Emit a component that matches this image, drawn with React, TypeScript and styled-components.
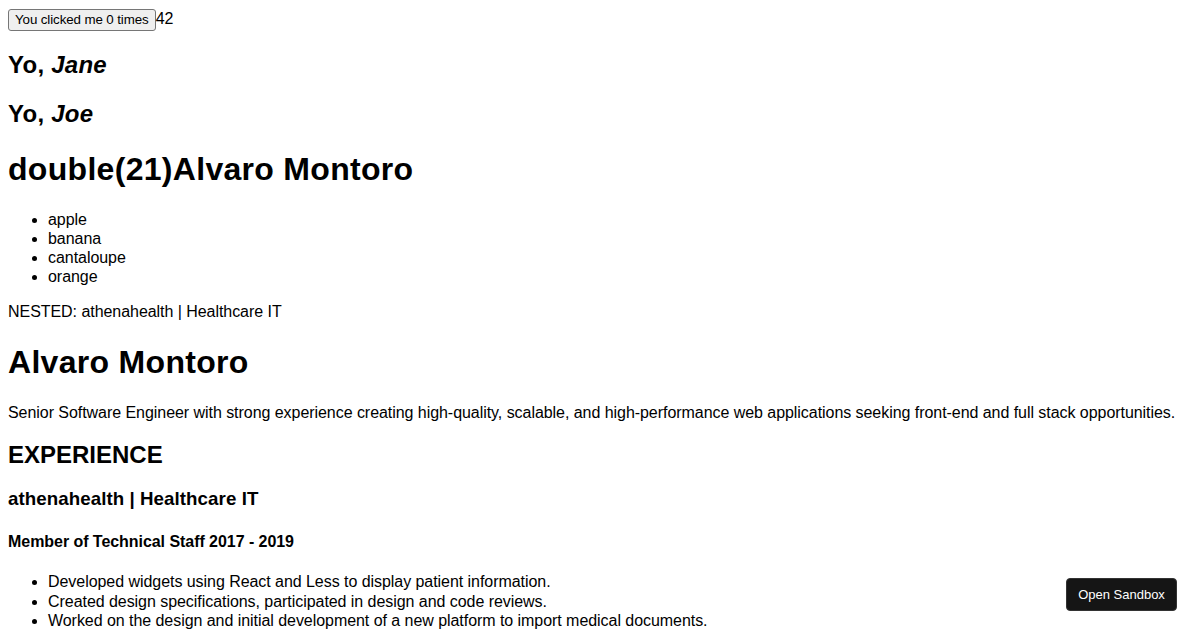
import React from "react";
import styled, { createGlobalStyle } from "styled-components";

const Global = createGlobalStyle`
  body {
    margin: 8px;
    font-family: "Liberation Sans", Arial, Helvetica, sans-serif;
    line-height: 1.2;
    letter-spacing: -0.05px;
    color: #000;
    background: #fff;
  }
`;

const TopLine = styled.div`
  line-height: 22px;
`;

const Counter = styled.button`
  font-family: "Liberation Sans", Arial, sans-serif;
  font-size: 13.333px;
  line-height: 16px;
  padding: 2px 6px;
  border: 1px solid #767676;
  border-radius: 3px;
  background: #efefef;
  color: #000;
  letter-spacing: -0.1px;
`;

const Greeting = styled.h2`
  font-size: 24px;
  margin: 19.92px 0;
  letter-spacing: 0.25px;
`;

const Title = styled.h1`
  font-size: 32px;
  margin: 21.44px 0;
  letter-spacing: 0.3px;
`;

const List = styled.ul`
  margin: 16px 0;
  padding-left: 40px;
`;

const Para = styled.p`
  margin: 16px 0;
`;

const Section = styled.h2`
  font-size: 24px;
  margin: 19.92px 0;
  line-height: 1.1;
  letter-spacing: 0;
`;

const Company = styled.h3`
  font-size: 18.72px;
  margin: 18.72px 0;
  letter-spacing: 0.07px;
`;

const Role = styled.h4`
  font-size: 16px;
  margin: 21.28px 0;
  letter-spacing: -0.05px;
`;

const SandboxButton = styled.a`
  position: fixed;
  right: 23px;
  bottom: 19px;
  width: 111px;
  height: 33px;
  display: flex;
  align-items: center;
  justify-content: center;
  background: #151515;
  color: #fff;
  border: 1px solid #333;
  box-sizing: border-box;
  border-radius: 4px;
  font-family: "Liberation Sans", Arial, sans-serif;
  font-size: 13px;
  letter-spacing: 0;
  text-decoration: none;
`;

const fruits = ["apple", "banana", "cantaloupe", "orange"];
const duties = [
  "Developed widgets using React and Less to display patient information.",
  "Created design specifications, participated in design and code reviews.",
  "Worked on the design and initial development of a new platform to import medical documents.",
];

export default function App() {
  return (
    <>
      <Global />
      <TopLine>
        <Counter>You clicked me 0 times</Counter>42
      </TopLine>
      <Greeting>
        Yo, <i>Jane</i>
      </Greeting>
      <Greeting>
        Yo, <i>Joe</i>
      </Greeting>
      <Title>double(21)Alvaro Montoro</Title>
      <List>
        {fruits.map((f) => (
          <li key={f}>{f}</li>
        ))}
      </List>
      <Para>NESTED: athenahealth | Healthcare IT</Para>
      <Title>Alvaro Montoro</Title>
      <Para>
        Senior Software Engineer with strong experience creating high-quality, scalable, and
        high-performance web applications seeking front-end and full stack opportunities.
      </Para>
      <Section>EXPERIENCE</Section>
      <Company>athenahealth | Healthcare IT</Company>
      <Role>Member of Technical Staff 2017 - 2019</Role>
      <List>
        {duties.map((d) => (
          <li key={d}>{d}</li>
        ))}
      </List>
      <SandboxButton href="#">Open Sandbox</SandboxButton>
    </>
  );
}
